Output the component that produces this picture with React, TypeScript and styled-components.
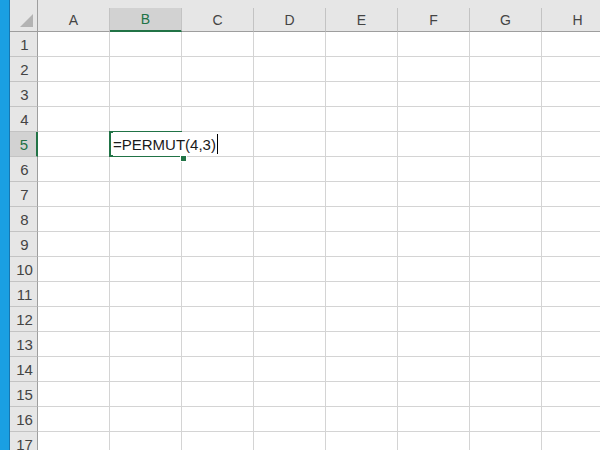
import React from "react";
import styled, { createGlobalStyle } from "styled-components";

const GlobalStyle = createGlobalStyle`
  html, body {
    margin: 0;
    padding: 0;
    background: #ffffff;
    overflow: hidden;
  }
`;

const COLS = ["A", "B", "C", "D", "E", "F", "G", "H"];
const ROWS = Array.from({ length: 17 }, (_, i) => i + 1);
const SEL_COL = "B";
const SEL_ROW = 5;

const Screen = styled.div`
  width: 600px;
  height: 450px;
  display: flex;
  overflow: hidden;
  font-family: "Liberation Sans", Arial, sans-serif;
`;

const Ribbon = styled.div`
  width: 9px;
  flex: none;
  background: #1a9fe2;
  border-right: 1px solid #1676b0;
`;

const Sheet = styled.div`
  display: grid;
  grid-template-columns: 28px repeat(8, 72px);
  grid-template-rows: 32px repeat(17, 25px);
  flex: none;
`;

const Corner = styled.div`
  background: #e6e6e6;
  border-bottom: 1px solid #9e9e9e;
  border-right: 1px solid #9e9e9e;
  box-sizing: border-box;
  position: relative;
`;

const CornerTriangle = styled.div`
  position: absolute;
  right: 4px;
  bottom: 4px;
  width: 0;
  height: 0;
  border-left: 13px solid transparent;
  border-bottom: 13px solid #b3b3b3;
`;

const ColHeader = styled.div`
  background: #e6e6e6;
  display: flex;
  flex-direction: column;
  justify-content: flex-end;
`;

const ColLabel = styled.div<{ $active: boolean }>`
  height: 24px;
  box-sizing: border-box;
  display: flex;
  align-items: center;
  justify-content: center;
  font-size: 14px;
  color: ${(p) => (p.$active ? "#217346" : "#444444")};
  background: ${(p) => (p.$active ? "#d2d2d2" : "#e6e6e6")};
  border-right: 1px solid #c3c3c3;
  border-bottom: ${(p) => (p.$active ? "2px solid #217346" : "1px solid #9e9e9e")};
`;

const RowHeader = styled.div<{ $active: boolean }>`
  box-sizing: border-box;
  display: flex;
  align-items: center;
  justify-content: center;
  font-size: 15px;
  color: ${(p) => (p.$active ? "#217346" : "#444444")};
  background: ${(p) => (p.$active ? "#d2d2d2" : "#e6e6e6")};
  border-bottom: 1px solid #c3c3c3;
  border-right: ${(p) => (p.$active ? "2px solid #217346" : "1px solid #9e9e9e")};
  padding-left: 2px;
`;

const Cell = styled.div<{ $hideRight?: boolean }>`
  box-sizing: border-box;
  border-right: 1px solid ${(p) => (p.$hideRight ? "transparent" : "#d4d4d4")};
  border-bottom: 1px solid #d4d4d4;
  background: #ffffff;
`;

const ActiveCell = styled.div`
  position: relative;
  box-sizing: border-box;
  border-bottom: 1px solid #d4d4d4;
  background: #ffffff;
  overflow: visible;
  z-index: 2;
`;

const SelectionFrame = styled.div`
  position: absolute;
  left: -1px;
  top: -1px;
  width: 73px;
  height: 26px;
  box-sizing: border-box;
  border: 2px solid #217346;
  border-right: none;
`;

const FillHandle = styled.div`
  position: absolute;
  left: 70px;
  top: 23px;
  width: 5px;
  height: 5px;
  background: #217346;
  border: 1px solid #ffffff;
`;

const Formula = styled.div`
  position: absolute;
  left: 3px;
  top: 0;
  height: 24px;
  display: flex;
  align-items: center;
  white-space: nowrap;
  font-size: 15px;
  color: #1a1a1a;
  background: #ffffff;
  padding-right: 1px;
`;

const Caret = styled.span`
  display: inline-block;
  width: 1px;
  height: 20px;
  margin-left: 1px;
  background: #000000;
`;

export default function App() {
  return (
    <>
      <GlobalStyle />
      <Screen>
        <Ribbon />
        <Sheet>
          <Corner>
            <CornerTriangle />
          </Corner>
          {COLS.map((c) => (
            <ColHeader key={c}>
              <ColLabel $active={c === SEL_COL}>{c}</ColLabel>
            </ColHeader>
          ))}
          {ROWS.map((r) => (
            <React.Fragment key={r}>
              <RowHeader $active={r === SEL_ROW}>{r}</RowHeader>
              {COLS.map((c) =>
                r === SEL_ROW && c === SEL_COL ? (
                  <ActiveCell key={c}>
                    <SelectionFrame />
                    <Formula>
                      =PERMUT(4,3)
                      <Caret />
                    </Formula>
                    <FillHandle />
                  </ActiveCell>
                ) : (
                  <Cell key={c} />
                )
              )}
            </React.Fragment>
          ))}
        </Sheet>
      </Screen>
    </>
  );
}
